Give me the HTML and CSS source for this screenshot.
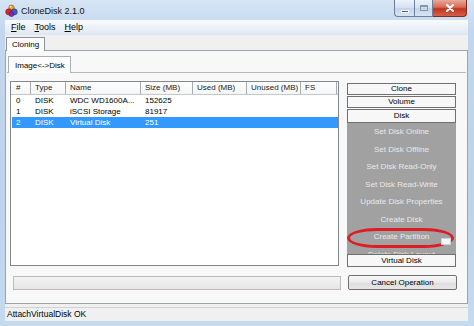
FILE: index.html
```html
<!DOCTYPE html>
<html>
<head>
<meta charset="utf-8">
<title>CloneDisk 2.1.0</title>
<link rel="stylesheet" href="styles.css">
</head>
<body>
<div class="window">
  <div class="titlebar">
    <svg class="appicon" viewBox="0 0 14 14" width="13" height="13">
      <circle cx="7" cy="4" r="3" fill="#f0a21c" stroke="#7a4a10" stroke-width="0.5"/>
      <circle cx="4" cy="8.5" r="3.3" fill="#d8262a" stroke="#6a1010" stroke-width="0.5"/>
      <circle cx="10" cy="8.5" r="3.3" fill="#3a5cc6" stroke="#1a2a60" stroke-width="0.5"/>
      <circle cx="7" cy="11" r="2.6" fill="#7b2f9e" stroke="#3a1050" stroke-width="0.5"/>
      <circle cx="6" cy="3" r="0.9" fill="#fff3c0"/>
    </svg>
    <span class="title">CloneDisk 2.1.0</span>
    <div class="caption-btns">
      <div class="cbtn cmin"><span class="glyph-min"></span></div>
      <div class="cbtn cmax"><span class="glyph-max"></span></div>
      <div class="cbtn cclose">
        <svg viewBox="0 0 10 8" width="10" height="8"><path d="M2 1 L8 7 M8 1 L2 7" stroke="#fff" stroke-width="2" stroke-linecap="round"/></svg>
      </div>
    </div>
  </div>
  <div class="client">
    <div class="menubar">
      <span class="mitem"><u>F</u>ile</span>
      <span class="mitem"><u>T</u>ools</span>
      <span class="mitem"><u>H</u>elp</span>
    </div>
    <div class="tabstrip">
      <div class="tab">Cloning</div>
    </div>
    <div class="tabpage">
      <div class="tabstrip inner">
        <div class="tab">Image&lt;-&gt;Disk</div>
      </div>
      <div class="innerpage">
        <div class="main">
          <div class="listview">
            <div class="lv-row lv-head">
              <div class="cell">#</div>
              <div class="cell">Type</div>
              <div class="cell">Name</div>
              <div class="cell">Size (MB)</div>
              <div class="cell">Used (MB)</div>
              <div class="cell">Unused (MB)</div>
              <div class="cell">FS</div>
            </div>
            <div class="lv-row">
              <div class="cell">0</div><div class="cell">DISK</div><div class="cell">WDC WD1600A...</div><div class="cell">152625</div><div class="cell"></div><div class="cell"></div><div class="cell"></div>
            </div>
            <div class="lv-row">
              <div class="cell">1</div><div class="cell">DISK</div><div class="cell">iSCSI Storage</div><div class="cell">81917</div><div class="cell"></div><div class="cell"></div><div class="cell"></div>
            </div>
            <div class="lv-row selected">
              <div class="cell">2</div><div class="cell">DISK</div><div class="cell">Virtual Disk</div><div class="cell">251</div><div class="cell"></div><div class="cell"></div><div class="cell"></div>
            </div>
          </div>
          <div class="panel">
            <div class="pbtn">Clone</div>
            <div class="pbtn">Volume</div>
            <div class="pbtn disk">Disk</div>
            <div class="tasks">
              <div class="task">Set Disk Online</div>
              <div class="task">Set Disk Offline</div>
              <div class="task">Set Disk Read-Only</div>
              <div class="task">Set Disk Read-Write</div>
              <div class="task">Update Disk Properties</div>
              <div class="task">Create Disk</div>
              <div class="task">Create Partition</div>
              <div class="task">Delete Disk Layout</div>
            </div>
            <div class="pbtn vdisk">Virtual Disk</div>
            <div class="highlight"></div>
            <div class="cursorbox"></div>
          </div>
        </div>
        <div class="bottom">
          <div class="progress"></div>
          <div class="btn cancel">Cancel Operation</div>
        </div>
      </div>
    </div>
    <div class="statusbar">AttachVirtualDisk OK</div>
  </div>
</div>
</body>
</html>
```

FILE: styles.css
```css
* { box-sizing: border-box; margin: 0; padding: 0; }
html, body { width: 474px; height: 326px; overflow: hidden; }
body {
  font-family: "Liberation Sans", Arial, sans-serif;
  font-size: 8px;
  color: #000;
  background: #c3d7ed;
}
.window {
  width: 474px;
  height: 326px;
  display: flex;
  flex-direction: column;
  padding: 0 6px 5px 5px;
  background: linear-gradient(#d6e5f5, #c2d7ee 30px, #bdd3ea 200px, #c6daef);
}
.titlebar {
  height: 20px;
  display: flex;
  align-items: center;
  flex-shrink: 0;
}
.appicon { margin-top: 1px; }
.title {
  margin-left: 3px;
  font-size: 9px;
  color: #111;
  margin-top: 1px;
}
.caption-btns {
  margin-left: auto;
  margin-right: 1px;
  align-self: flex-start;
  display: flex;
}
.cbtn {
  height: 17px;
  border: 1px solid #6c7f9c;
  border-top: none;
  display: flex;
  align-items: center;
  justify-content: center;
}
.cmin {
  width: 20px;
  border-radius: 0 0 0 4px;
  background: linear-gradient(#eef3fa, #d3e0f0 50%, #c3d4ea 51%, #d6e4f4);
  border-right: none;
}
.cmax {
  width: 19px;
  background: linear-gradient(#eef3fa, #d3e0f0 50%, #c3d4ea 51%, #d6e4f4);
}
.cclose {
  width: 34px;
  border-left: none;
  border-color: #7b2d22;
  border-radius: 0 0 4px 0;
  background: linear-gradient(#eaa99b, #d66a55 45%, #c3351d 55%, #d4614a);
}
.glyph-min {
  width: 8px;
  height: 3px;
  margin-top: 6px;
  background: #4d5c73;
  border: 1px solid #f4f7fb;
}
.glyph-max {
  width: 8px;
  height: 6px;
  border: 1px solid #8896ab;
  border-top-width: 2px;
}
.client {
  flex: 1;
  background: #f0f0f0;
  display: flex;
  flex-direction: column;
}
.menubar {
  height: 15px;
  flex-shrink: 0;
  display: flex;
  align-items: center;
  gap: 9px;
  padding-left: 6px;
  font-size: 9px;
  background: linear-gradient(#f9fbfd, #eaf0f7 60%, #e1e8f2);
  border-bottom: 1px solid #dfe6ef;
}
.mitem u { text-decoration: underline; }
.tabstrip {
  height: 15px;
  flex-shrink: 0;
  display: flex;
  align-items: flex-end;
  padding-left: 1px;
}
.tab {
  height: 14px;
  padding: 0 5px 0 5px;
  display: flex;
  align-items: center;
  background: #fbfbfb;
  border: 1px solid #8f939b;
  border-bottom: none;
  margin-bottom: -1px;
  position: relative;
  z-index: 1;
  font-size: 8px;
}
.tabpage {
  height: 254px;
  flex-shrink: 0;
  background: #f8f8f8;
  border: 1px solid #9ea2aa;
  display: flex;
  flex-direction: column;
}
.tabstrip.inner {
  height: 21px;
  padding-left: 2px;
}
.tabstrip.inner .tab {
  height: 17px;
  padding: 0 5px 0 6px;
  background: #fdfdfd;
  border-color: #a9adb4;
}
.innerpage {
  flex: 1;
  border-top: 1px solid #b4b7bd;
  margin: 0 1px 0 1px;
  padding: 8px 0 0 3px;
  background: #f8f8f8;
}
.main {
  display: flex;
  gap: 8px;
  align-items: flex-start;
}
.listview {
  width: 329px;
  height: 185px;
  border: 1px solid #828790;
  background: #fff;
  padding-left: 1px;
  flex-shrink: 0;
}
.lv-row {
  display: grid;
  grid-template-columns: 19px 35px 75px 52px 54px 54px 36px;
  height: 11px;
  align-items: center;
}
.lv-row .cell {
  padding-left: 4px;
  white-space: nowrap;
  overflow: hidden;
  line-height: 11px;
  height: 11px;
}
.lv-head {
  height: 13px;
  background: linear-gradient(#ffffff, #f4f5f7);
  border-bottom: 1px solid #c5c7cb;
  margin-left: -1px;
  padding-left: 1px;
}
.lv-head .cell {
  height: 12px;
  line-height: 12px;
  border-right: 1px solid #a9abb0;
  color: #222;
}
.lv-row.selected {
  background: #3399ff;
  color: #fff;
}
.panel {
  width: 109px;
  margin-top: 2px;
  display: flex;
  flex-direction: column;
  position: relative;
}
.pbtn {
  height: 12px;
  margin-bottom: 1px;
  border: 1px solid #707070;
  background: #f7f7f7;
  text-align: center;
  line-height: 10px;
  font-size: 8px;
}
.pbtn.disk {
  height: 14px;
  margin-bottom: 0;
  line-height: 12px;
}
.pbtn.vdisk {
  height: 13px;
  margin-bottom: 0;
  line-height: 11px;
  position: relative;
  z-index: 1;
}
.tasks {
  height: 131px;
  overflow: hidden;
  background: #a1a1a1;
}
.task {
  height: 17.5px;
  line-height: 17.5px;
  text-align: center;
  color: #e9e9e9;
  font-size: 8px;
}
.highlight {
  position: absolute;
  left: 0;
  top: 145px;
  width: 107px;
  height: 20px;
  border: 3px solid #dd1c24;
  border-radius: 30px / 10px;
}
.cursorbox {
  position: absolute;
  left: 94px;
  top: 155px;
  width: 10px;
  height: 7px;
  background: #f3f6fb;
  border: 1px solid #c9d3e2;
}
.bottom {
  display: flex;
  align-items: flex-start;
  margin-top: 8px;
}
.progress {
  width: 328px;
  height: 14px;
  margin: 1px 0 0 3px;
  border: 1px solid #bcbcbc;
  background: linear-gradient(#f3f3f3, #e6e6e6);
}
.btn.cancel {
  width: 109px;
  height: 15px;
  margin-left: 7px;
  border: 1px solid #707070;
  border-radius: 2px;
  background: linear-gradient(#f8f8f8, #e9e9e9 50%, #dddddd 51%, #e6e6e6);
  text-align: center;
  line-height: 13px;
  font-size: 8px;
}
.statusbar {
  margin-top: 3px;
  height: 14px;
  border-top: 1px solid #d2d2d2;
  padding-left: 2px;
  line-height: 13px;
  font-size: 8.5px;
  background: #f0f0f0;
}
```
